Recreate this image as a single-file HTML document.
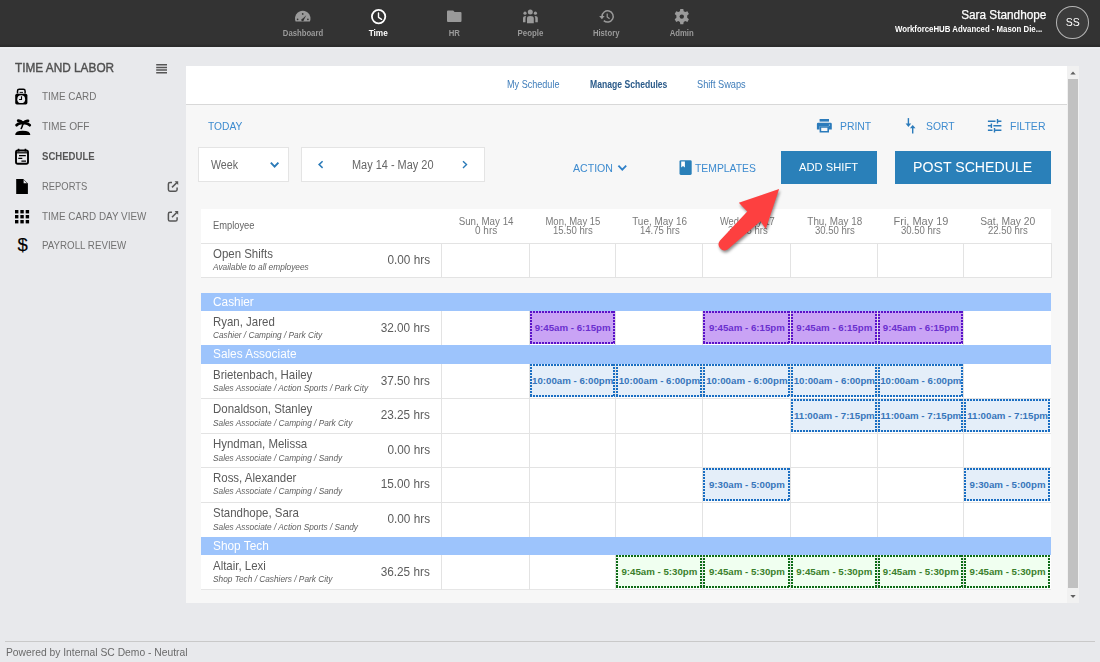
<!DOCTYPE html>
<html><head><meta charset="utf-8">
<style>
*{box-sizing:border-box;margin:0;padding:0}
html,body{width:1100px;height:662px;overflow:hidden;background:#e8e9ec;font-family:"Liberation Sans",sans-serif}
.t{position:absolute;white-space:nowrap;line-height:1}
.a{position:absolute}
#hdr{left:0;top:0;width:1100px;height:47px;background:linear-gradient(#333333 0,#333333 44px,#2e2e2e 45px,#2b2b2b 47px)}
#panel{left:186px;top:66px;width:881px;height:537px;background:#f7f7f7}
#subnav{left:186px;top:66px;width:881px;height:39px;background:#fff;border-bottom:1px solid #d8d8d8}
#sb{left:1067px;top:66px;width:12px;height:537px;background:#f1f1f1}
#thumb{left:1068px;top:79px;width:10px;height:509px;background:#c1c1c1}
.box{background:#fff;border:1px solid #e0e0e0}
.btn{background:#2980b9}
.tbl{background:#fff}
.hl{position:absolute;height:1px;background:#e2e2e2}
.vl{position:absolute;width:1px;background:#e2e2e2}
.band{position:absolute;left:201px;width:850px;background:#9fc5fb}
.sh{position:absolute}
</style></head><body>
<div class="a" id="hdr"></div>
<div class="a" style="left:0;top:47px;width:1100px;height:2px;background:#ecedf0"></div>
<div class="a" id="avatar" style="left:1056px;top:5.5px;width:33px;height:33.5px;border-radius:50%;border:1.6px solid #b5b5b5;background:#3c3c3c"></div>
<div class="a" id="panel"></div>
<div class="a" id="subnav"></div>
<div class="a" id="sb"></div>
<div class="a" id="thumb"></div>
<div class="a" style="left:198.00px;top:147.00px;width:91.00px;height:34.50px;background:#fff;border:1px solid #e4e4e4"></div>
<div class="a" style="left:301.00px;top:147.00px;width:184.00px;height:34.50px;background:#fff;border:1px solid #e4e4e4"></div>
<div class="a" style="left:780.50px;top:151.00px;width:96.50px;height:32.60px;background:#2a80b9"></div>
<div class="a" style="left:895.20px;top:151.00px;width:155.90px;height:32.60px;background:#2a80b9"></div>
<div class="a" style="left:201.00px;top:209.00px;width:850.00px;height:34.00px;background:#fff"></div>
<div class="a" style="left:201.00px;top:243.00px;width:850.00px;height:34.50px;background:#fff;border-top:1px solid #e3e3e3;border-bottom:1px solid #e3e3e3"></div>
<div class="a" style="left:201.00px;top:311.00px;width:850.00px;height:278.50px;background:#fff"></div>
<div class="a" style="left:201.00px;top:397.70px;width:850.00px;height:1.00px;background:#e3e3e3"></div>
<div class="a" style="left:201.00px;top:432.70px;width:850.00px;height:1.00px;background:#e3e3e3"></div>
<div class="a" style="left:201.00px;top:466.60px;width:850.00px;height:1.00px;background:#e3e3e3"></div>
<div class="a" style="left:201.00px;top:501.80px;width:850.00px;height:1.00px;background:#e3e3e3"></div>
<div class="a" style="left:201.00px;top:588.80px;width:850.00px;height:1.00px;background:#e6e6e6"></div>
<div class="a" style="left:441.30px;top:243.00px;width:1.00px;height:34.50px;background:#e3e3e3"></div>
<div class="a" style="left:441.30px;top:311.00px;width:1.00px;height:34.00px;background:#e3e3e3"></div>
<div class="a" style="left:441.30px;top:363.70px;width:1.00px;height:173.20px;background:#e3e3e3"></div>
<div class="a" style="left:441.30px;top:555.00px;width:1.00px;height:34.50px;background:#e3e3e3"></div>
<div class="a" style="left:528.80px;top:243.00px;width:1.00px;height:34.50px;background:#e3e3e3"></div>
<div class="a" style="left:528.80px;top:311.00px;width:1.00px;height:34.00px;background:#e3e3e3"></div>
<div class="a" style="left:528.80px;top:363.70px;width:1.00px;height:173.20px;background:#e3e3e3"></div>
<div class="a" style="left:528.80px;top:555.00px;width:1.00px;height:34.50px;background:#e3e3e3"></div>
<div class="a" style="left:615.00px;top:243.00px;width:1.00px;height:34.50px;background:#e3e3e3"></div>
<div class="a" style="left:615.00px;top:311.00px;width:1.00px;height:34.00px;background:#e3e3e3"></div>
<div class="a" style="left:615.00px;top:363.70px;width:1.00px;height:173.20px;background:#e3e3e3"></div>
<div class="a" style="left:615.00px;top:555.00px;width:1.00px;height:34.50px;background:#e3e3e3"></div>
<div class="a" style="left:702.20px;top:243.00px;width:1.00px;height:34.50px;background:#e3e3e3"></div>
<div class="a" style="left:702.20px;top:311.00px;width:1.00px;height:34.00px;background:#e3e3e3"></div>
<div class="a" style="left:702.20px;top:363.70px;width:1.00px;height:173.20px;background:#e3e3e3"></div>
<div class="a" style="left:702.20px;top:555.00px;width:1.00px;height:34.50px;background:#e3e3e3"></div>
<div class="a" style="left:790.00px;top:243.00px;width:1.00px;height:34.50px;background:#e3e3e3"></div>
<div class="a" style="left:790.00px;top:311.00px;width:1.00px;height:34.00px;background:#e3e3e3"></div>
<div class="a" style="left:790.00px;top:363.70px;width:1.00px;height:173.20px;background:#e3e3e3"></div>
<div class="a" style="left:790.00px;top:555.00px;width:1.00px;height:34.50px;background:#e3e3e3"></div>
<div class="a" style="left:877.00px;top:243.00px;width:1.00px;height:34.50px;background:#e3e3e3"></div>
<div class="a" style="left:877.00px;top:311.00px;width:1.00px;height:34.00px;background:#e3e3e3"></div>
<div class="a" style="left:877.00px;top:363.70px;width:1.00px;height:173.20px;background:#e3e3e3"></div>
<div class="a" style="left:877.00px;top:555.00px;width:1.00px;height:34.50px;background:#e3e3e3"></div>
<div class="a" style="left:963.00px;top:243.00px;width:1.00px;height:34.50px;background:#e3e3e3"></div>
<div class="a" style="left:963.00px;top:311.00px;width:1.00px;height:34.00px;background:#e3e3e3"></div>
<div class="a" style="left:963.00px;top:363.70px;width:1.00px;height:173.20px;background:#e3e3e3"></div>
<div class="a" style="left:963.00px;top:555.00px;width:1.00px;height:34.50px;background:#e3e3e3"></div>
<div class="a" style="left:1050.50px;top:243.00px;width:1.00px;height:34.50px;background:#e3e3e3"></div>
<div class="a" style="left:201.00px;top:293.00px;width:850.00px;height:18.00px;background:#9dc4fc"></div>
<div class="a" style="left:201.00px;top:345.00px;width:850.00px;height:18.70px;background:#9dc4fc"></div>
<div class="a" style="left:201.00px;top:537.00px;width:850.00px;height:18.00px;background:#9dc4fc"></div>
<div class="a" style="left:530.00px;top:311.00px;width:85.00px;height:33.00px;background:repeating-linear-gradient(90deg,#5a12c8 0 1.6px,transparent 1.6px 3px) left top/100% 2px no-repeat,repeating-linear-gradient(90deg,#5a12c8 0 1.6px,transparent 1.6px 3px) left bottom/100% 2px no-repeat,repeating-linear-gradient(180deg,#5a12c8 0 1.6px,transparent 1.6px 3px) left top/2px 100% no-repeat,repeating-linear-gradient(180deg,#5a12c8 0 1.6px,transparent 1.6px 3px) right top/2px 100% no-repeat,#c9a3f5"></div>
<div class="a" style="left:703.00px;top:311.00px;width:87.00px;height:33.00px;background:repeating-linear-gradient(90deg,#5a12c8 0 1.6px,transparent 1.6px 3px) left top/100% 2px no-repeat,repeating-linear-gradient(90deg,#5a12c8 0 1.6px,transparent 1.6px 3px) left bottom/100% 2px no-repeat,repeating-linear-gradient(180deg,#5a12c8 0 1.6px,transparent 1.6px 3px) left top/2px 100% no-repeat,repeating-linear-gradient(180deg,#5a12c8 0 1.6px,transparent 1.6px 3px) right top/2px 100% no-repeat,#c9a3f5"></div>
<div class="a" style="left:791.00px;top:311.00px;width:86.00px;height:33.00px;background:repeating-linear-gradient(90deg,#5a12c8 0 1.6px,transparent 1.6px 3px) left top/100% 2px no-repeat,repeating-linear-gradient(90deg,#5a12c8 0 1.6px,transparent 1.6px 3px) left bottom/100% 2px no-repeat,repeating-linear-gradient(180deg,#5a12c8 0 1.6px,transparent 1.6px 3px) left top/2px 100% no-repeat,repeating-linear-gradient(180deg,#5a12c8 0 1.6px,transparent 1.6px 3px) right top/2px 100% no-repeat,#c9a3f5"></div>
<div class="a" style="left:878.00px;top:311.00px;width:85.00px;height:33.00px;background:repeating-linear-gradient(90deg,#5a12c8 0 1.6px,transparent 1.6px 3px) left top/100% 2px no-repeat,repeating-linear-gradient(90deg,#5a12c8 0 1.6px,transparent 1.6px 3px) left bottom/100% 2px no-repeat,repeating-linear-gradient(180deg,#5a12c8 0 1.6px,transparent 1.6px 3px) left top/2px 100% no-repeat,repeating-linear-gradient(180deg,#5a12c8 0 1.6px,transparent 1.6px 3px) right top/2px 100% no-repeat,#c9a3f5"></div>
<div class="a" style="left:530.00px;top:364.00px;width:85.00px;height:33.00px;background:repeating-linear-gradient(90deg,#1a6ec2 0 1.6px,transparent 1.6px 3px) left top/100% 2px no-repeat,repeating-linear-gradient(90deg,#1a6ec2 0 1.6px,transparent 1.6px 3px) left bottom/100% 2px no-repeat,repeating-linear-gradient(180deg,#1a6ec2 0 1.6px,transparent 1.6px 3px) left top/2px 100% no-repeat,repeating-linear-gradient(180deg,#1a6ec2 0 1.6px,transparent 1.6px 3px) right top/2px 100% no-repeat,#e4eef9"></div>
<div class="a" style="left:616.00px;top:364.00px;width:86.00px;height:33.00px;background:repeating-linear-gradient(90deg,#1a6ec2 0 1.6px,transparent 1.6px 3px) left top/100% 2px no-repeat,repeating-linear-gradient(90deg,#1a6ec2 0 1.6px,transparent 1.6px 3px) left bottom/100% 2px no-repeat,repeating-linear-gradient(180deg,#1a6ec2 0 1.6px,transparent 1.6px 3px) left top/2px 100% no-repeat,repeating-linear-gradient(180deg,#1a6ec2 0 1.6px,transparent 1.6px 3px) right top/2px 100% no-repeat,#e4eef9"></div>
<div class="a" style="left:703.00px;top:364.00px;width:87.00px;height:33.00px;background:repeating-linear-gradient(90deg,#1a6ec2 0 1.6px,transparent 1.6px 3px) left top/100% 2px no-repeat,repeating-linear-gradient(90deg,#1a6ec2 0 1.6px,transparent 1.6px 3px) left bottom/100% 2px no-repeat,repeating-linear-gradient(180deg,#1a6ec2 0 1.6px,transparent 1.6px 3px) left top/2px 100% no-repeat,repeating-linear-gradient(180deg,#1a6ec2 0 1.6px,transparent 1.6px 3px) right top/2px 100% no-repeat,#e4eef9"></div>
<div class="a" style="left:791.00px;top:364.00px;width:86.00px;height:33.00px;background:repeating-linear-gradient(90deg,#1a6ec2 0 1.6px,transparent 1.6px 3px) left top/100% 2px no-repeat,repeating-linear-gradient(90deg,#1a6ec2 0 1.6px,transparent 1.6px 3px) left bottom/100% 2px no-repeat,repeating-linear-gradient(180deg,#1a6ec2 0 1.6px,transparent 1.6px 3px) left top/2px 100% no-repeat,repeating-linear-gradient(180deg,#1a6ec2 0 1.6px,transparent 1.6px 3px) right top/2px 100% no-repeat,#e4eef9"></div>
<div class="a" style="left:878.00px;top:364.00px;width:85.00px;height:33.00px;background:repeating-linear-gradient(90deg,#1a6ec2 0 1.6px,transparent 1.6px 3px) left top/100% 2px no-repeat,repeating-linear-gradient(90deg,#1a6ec2 0 1.6px,transparent 1.6px 3px) left bottom/100% 2px no-repeat,repeating-linear-gradient(180deg,#1a6ec2 0 1.6px,transparent 1.6px 3px) left top/2px 100% no-repeat,repeating-linear-gradient(180deg,#1a6ec2 0 1.6px,transparent 1.6px 3px) right top/2px 100% no-repeat,#e4eef9"></div>
<div class="a" style="left:791.00px;top:399.00px;width:86.00px;height:33.00px;background:repeating-linear-gradient(90deg,#1a6ec2 0 1.6px,transparent 1.6px 3px) left top/100% 2px no-repeat,repeating-linear-gradient(90deg,#1a6ec2 0 1.6px,transparent 1.6px 3px) left bottom/100% 2px no-repeat,repeating-linear-gradient(180deg,#1a6ec2 0 1.6px,transparent 1.6px 3px) left top/2px 100% no-repeat,repeating-linear-gradient(180deg,#1a6ec2 0 1.6px,transparent 1.6px 3px) right top/2px 100% no-repeat,#e4eef9"></div>
<div class="a" style="left:878.00px;top:399.00px;width:85.00px;height:33.00px;background:repeating-linear-gradient(90deg,#1a6ec2 0 1.6px,transparent 1.6px 3px) left top/100% 2px no-repeat,repeating-linear-gradient(90deg,#1a6ec2 0 1.6px,transparent 1.6px 3px) left bottom/100% 2px no-repeat,repeating-linear-gradient(180deg,#1a6ec2 0 1.6px,transparent 1.6px 3px) left top/2px 100% no-repeat,repeating-linear-gradient(180deg,#1a6ec2 0 1.6px,transparent 1.6px 3px) right top/2px 100% no-repeat,#e4eef9"></div>
<div class="a" style="left:964.00px;top:399.00px;width:86.00px;height:33.00px;background:repeating-linear-gradient(90deg,#1a6ec2 0 1.6px,transparent 1.6px 3px) left top/100% 2px no-repeat,repeating-linear-gradient(90deg,#1a6ec2 0 1.6px,transparent 1.6px 3px) left bottom/100% 2px no-repeat,repeating-linear-gradient(180deg,#1a6ec2 0 1.6px,transparent 1.6px 3px) left top/2px 100% no-repeat,repeating-linear-gradient(180deg,#1a6ec2 0 1.6px,transparent 1.6px 3px) right top/2px 100% no-repeat,#e4eef9"></div>
<div class="a" style="left:703.00px;top:468.00px;width:87.00px;height:33.00px;background:repeating-linear-gradient(90deg,#1a6ec2 0 1.6px,transparent 1.6px 3px) left top/100% 2px no-repeat,repeating-linear-gradient(90deg,#1a6ec2 0 1.6px,transparent 1.6px 3px) left bottom/100% 2px no-repeat,repeating-linear-gradient(180deg,#1a6ec2 0 1.6px,transparent 1.6px 3px) left top/2px 100% no-repeat,repeating-linear-gradient(180deg,#1a6ec2 0 1.6px,transparent 1.6px 3px) right top/2px 100% no-repeat,#e4eef9"></div>
<div class="a" style="left:964.00px;top:468.00px;width:86.00px;height:33.00px;background:repeating-linear-gradient(90deg,#1a6ec2 0 1.6px,transparent 1.6px 3px) left top/100% 2px no-repeat,repeating-linear-gradient(90deg,#1a6ec2 0 1.6px,transparent 1.6px 3px) left bottom/100% 2px no-repeat,repeating-linear-gradient(180deg,#1a6ec2 0 1.6px,transparent 1.6px 3px) left top/2px 100% no-repeat,repeating-linear-gradient(180deg,#1a6ec2 0 1.6px,transparent 1.6px 3px) right top/2px 100% no-repeat,#e4eef9"></div>
<div class="a" style="left:616.00px;top:555.00px;width:86.00px;height:33.00px;background:repeating-linear-gradient(90deg,#0e6b17 0 1.6px,transparent 1.6px 3px) left top/100% 2px no-repeat,repeating-linear-gradient(90deg,#0e6b17 0 1.6px,transparent 1.6px 3px) left bottom/100% 2px no-repeat,repeating-linear-gradient(180deg,#0e6b17 0 1.6px,transparent 1.6px 3px) left top/2px 100% no-repeat,repeating-linear-gradient(180deg,#0e6b17 0 1.6px,transparent 1.6px 3px) right top/2px 100% no-repeat,#f0fff0"></div>
<div class="a" style="left:703.00px;top:555.00px;width:87.00px;height:33.00px;background:repeating-linear-gradient(90deg,#0e6b17 0 1.6px,transparent 1.6px 3px) left top/100% 2px no-repeat,repeating-linear-gradient(90deg,#0e6b17 0 1.6px,transparent 1.6px 3px) left bottom/100% 2px no-repeat,repeating-linear-gradient(180deg,#0e6b17 0 1.6px,transparent 1.6px 3px) left top/2px 100% no-repeat,repeating-linear-gradient(180deg,#0e6b17 0 1.6px,transparent 1.6px 3px) right top/2px 100% no-repeat,#f0fff0"></div>
<div class="a" style="left:791.00px;top:555.00px;width:86.00px;height:33.00px;background:repeating-linear-gradient(90deg,#0e6b17 0 1.6px,transparent 1.6px 3px) left top/100% 2px no-repeat,repeating-linear-gradient(90deg,#0e6b17 0 1.6px,transparent 1.6px 3px) left bottom/100% 2px no-repeat,repeating-linear-gradient(180deg,#0e6b17 0 1.6px,transparent 1.6px 3px) left top/2px 100% no-repeat,repeating-linear-gradient(180deg,#0e6b17 0 1.6px,transparent 1.6px 3px) right top/2px 100% no-repeat,#f0fff0"></div>
<div class="a" style="left:878.00px;top:555.00px;width:85.00px;height:33.00px;background:repeating-linear-gradient(90deg,#0e6b17 0 1.6px,transparent 1.6px 3px) left top/100% 2px no-repeat,repeating-linear-gradient(90deg,#0e6b17 0 1.6px,transparent 1.6px 3px) left bottom/100% 2px no-repeat,repeating-linear-gradient(180deg,#0e6b17 0 1.6px,transparent 1.6px 3px) left top/2px 100% no-repeat,repeating-linear-gradient(180deg,#0e6b17 0 1.6px,transparent 1.6px 3px) right top/2px 100% no-repeat,#f0fff0"></div>
<div class="a" style="left:964.00px;top:555.00px;width:86.00px;height:33.00px;background:repeating-linear-gradient(90deg,#0e6b17 0 1.6px,transparent 1.6px 3px) left top/100% 2px no-repeat,repeating-linear-gradient(90deg,#0e6b17 0 1.6px,transparent 1.6px 3px) left bottom/100% 2px no-repeat,repeating-linear-gradient(180deg,#0e6b17 0 1.6px,transparent 1.6px 3px) left top/2px 100% no-repeat,repeating-linear-gradient(180deg,#0e6b17 0 1.6px,transparent 1.6px 3px) right top/2px 100% no-repeat,#f0fff0"></div>
<svg class="a" style="left:0;top:0" width="1100" height="662" viewBox="0 0 1100 662">
<!-- dashboard gauge -->
<path fill="#9a9a9a" d="M295.6 21.5 A7.75 7.75 0 1 1 309.9 21.5 Z"/>
<g fill="#333">
 <circle cx="302.7" cy="13.9" r="0.85"/><circle cx="297.6" cy="19.3" r="0.85"/><circle cx="307.9" cy="19.3" r="0.85"/>
 <path d="M301.7 19.6 L306.3 15.3 L303.5 20.6 Z"/><circle cx="302.5" cy="20" r="1.2"/>
</g>
<!-- time clock -->
<g fill="none" stroke="#fff">
 <circle cx="378.6" cy="16.6" r="6.7" stroke-width="1.8"/>
 <path d="M378.5 13 V17.3 L381.6 19.3" stroke-width="1.4" stroke-linecap="round" stroke-linejoin="round"/>
</g>
<!-- HR folder -->
<path fill="#9a9a9a" d="M447 11.5 Q447 10.5 448 10.5 L453.2 10.5 L454.6 12 L460.5 12 Q461.5 12 461.5 13 L461.5 21 Q461.5 22 460.5 22 L448 22 Q447 22 447 21 Z"/>
<!-- people -->
<g fill="#9a9a9a">
 <circle cx="530.3" cy="12.1" r="2.5"/><circle cx="525" cy="13.2" r="1.6"/><circle cx="535.4" cy="13.2" r="1.6"/>
 <path d="M527 23.3 L527 18.5 Q527 16.1 530.3 16.1 Q533.8 16.1 533.8 18.5 L533.8 23.3 Z"/>
 <path d="M523 22.2 L523 18.3 Q523 16.1 526 16.1 L526.2 16.1 Q525.5 17.2 525.5 19 L525.5 22.2 Z"/>
 <path d="M537.8 22.2 L537.8 18.3 Q537.8 16.1 534.8 16.1 L534.6 16.1 Q535.3 17.2 535.3 19 L535.3 22.2 Z"/>
</g>
<!-- history -->
<g fill="none" stroke="#9a9a9a" stroke-width="1.5">
 <path d="M602 16.4 A5.6 5.6 0 1 1 603.8 20.6"/>
 <path d="M607.2 13.6 V17 L609.6 18.8" stroke-width="1.2"/>
</g>
<path fill="#9a9a9a" d="M599.2 16 L604.6 16 L601.9 19.2 Z"/>
<!-- admin gear -->
<g transform="translate(681.8 16.6)" fill="#9a9a9a">
 <path d="M-1.5 -7.6 L1.5 -7.6 L1.9 -5.4 L3.5 -4.5 L5.6 -5.3 L7.1 -2.7 L5.4 -1.2 L5.4 1.2 L7.1 2.7 L5.6 5.3 L3.5 4.5 L1.9 5.4 L1.5 7.6 L-1.5 7.6 L-1.9 5.4 L-3.5 4.5 L-5.6 5.3 L-7.1 2.7 L-5.4 1.2 L-5.4 -1.2 L-7.1 -2.7 L-5.6 -5.3 L-3.5 -4.5 L-1.9 -5.4 Z"/>
 <circle r="2.2" fill="#333"/>
</g>
<!-- sidebar icons -->
<g fill="#000">
 <!-- time card -->
 <path d="M17.5 93.6 L17.5 91 Q17.5 89.3 19.2 89.3 L23.4 89.3 Q25.1 89.3 25.1 91 L25.1 93.6" fill="none" stroke="#000" stroke-width="1.5"/>
 <rect x="19.6" y="91.9" width="3.4" height="0.9" fill="#000"/>
 <rect x="15.2" y="93.8" width="12.2" height="10.6" rx="1.6"/>
</g>
<circle cx="21.2" cy="99.2" r="3.9" fill="#e8e9ec"/>
<path d="M21.5 96.3 V99.5 H19.1" stroke="#000" stroke-width="1.1" fill="none"/>
<!-- time off -->
<g fill="none" stroke="#000" stroke-width="2.8" stroke-linecap="round">
 <path d="M22.8 123 Q20.5 120.3 18.2 120.6"/>
 <path d="M22.6 123.2 Q18.5 122.6 16.6 125.2"/>
 <path d="M23.2 123 Q25.8 120.3 28 120.9"/>
 <path d="M23.4 123.2 Q27.5 122.6 29.7 125.2"/>
 <path d="M22.6 125 Q22 127.4 21.2 128.4" stroke-width="1.6"/>
</g>
<g fill="#000">
 <path d="M15.2 135 Q15 130.7 22.7 130.7 Q30.4 130.7 30.3 135 Z"/>
</g>
<!-- schedule calendar -->
<g fill="none" stroke="#000">
 <rect x="16" y="150.5" width="12" height="13.2" rx="1.8" stroke-width="1.9"/>
 <path d="M18.6 148.7 V151.5 M25.4 148.7 V151.5" stroke-width="1.6"/>
 <path d="M16 152.8 H28" stroke-width="1.2"/>
 <path d="M19 155.7 H25.8 M18.3 158.4 H22.3 M21.4 161.1 H26" stroke-width="1.3"/>
</g>
<!-- reports -->
<path fill="#000" d="M16.2 178.9 L23.2 178.9 L27.9 183.6 L27.9 194 L16.2 194 Z"/>
<path fill="#e8e9ec" d="M23.6 179.8 L27 183.2 L23.6 183.2 Z"/>
<!-- grid -->
<g fill="#000">
 <rect x="15" y="210" width="3.4" height="3.4"/>
 <rect x="20.35" y="210" width="3.4" height="3.4"/>
 <rect x="25.7" y="210" width="3.4" height="3.4"/>
 <rect x="15" y="215" width="3.4" height="3.4"/>
 <rect x="20.35" y="215" width="3.4" height="3.4"/>
 <rect x="25.7" y="215" width="3.4" height="3.4"/>
 <rect x="15" y="220" width="3.4" height="3.4"/>
 <rect x="20.35" y="220" width="3.4" height="3.4"/>
 <rect x="25.7" y="220" width="3.4" height="3.4"/>
</g>
<!-- hamburger -->
<g stroke="#555" stroke-width="1.5">
 <path d="M156.2 64.7 H167 M156.2 67.4 H167 M156.2 70.1 H167 M156.2 72.8 H167"/>
</g>
<!-- external links -->
<g fill="none" stroke="#555" stroke-width="1.5">
 <path d="M172 182.5 H170 Q168.4 182.5 168.4 184.1 V189.6 Q168.4 191.2 170 191.2 H175.5 Q177.1 191.2 177.1 189.6 V187.5"/>
 <path d="M172 187.4 L177.2 182.2"/>
 <path d="M172 212.3 H170 Q168.4 212.3 168.4 213.9 V219.4 Q168.4 221 170 221 H175.5 Q177.1 221 177.1 219.4 V217.3"/>
 <path d="M172 217.2 L177.2 212"/>
</g>
<path fill="#555" d="M174.6 181.3 H178.2 V184.9 Z M174.6 211.1 H178.2 V214.7 Z"/>
<!-- print -->
<g fill="#2b7bbb">
 <rect x="819.6" y="119" width="9.4" height="2.6"/>
 <path d="M818.2 122.8 H830.5 Q831.8 122.8 831.8 124.1 V129.5 H829 V126.3 H819.6 V129.5 H816.9 V124.1 Q816.9 122.8 818.2 122.8 Z"/>
 <path d="M819.6 126.3 H829 V132.6 H819.6 Z M821.2 127.8 V131 H827.4 V127.8 Z" fill-rule="evenodd"/>
</g>
<circle cx="829.4" cy="125" r="0.6" fill="#f5f5f5"/>
<!-- sort -->
<g fill="#2b7bbb">
 <rect x="907.7" y="118.1" width="1.4" height="6"/>
 <path d="M905.6 123.4 H911.2 L908.4 127 Z"/>
 <rect x="912" y="127.5" width="1.4" height="6"/>
 <path d="M909.9 128.3 H915.5 L912.7 125 Z"/>
</g>
<!-- filter -->
<g stroke="#2b7bbb" stroke-width="1.4" fill="none">
 <path d="M987.9 121.3 H995.5 M997.5 121.3 H1001.4 M997.5 119 V123.5"/>
 <path d="M987.9 125.7 H991.4 M993.4 125.7 H1001.4 M991.4 123.6 V128"/>
 <path d="M987.9 130.3 H992.5 M994.5 130.3 H1001.4 M994.5 128.1 V132.5"/>
</g>
<!-- week chevron -->
<path d="M270.8 162.6 L274.6 166.6 L278.4 162.6" fill="none" stroke="#2a7ab8" stroke-width="1.9"/>
<!-- prev/next -->
<path d="M322.6 161.3 L319.1 164.6 L322.6 167.9" fill="none" stroke="#2a7ab8" stroke-width="1.5"/>
<path d="M463 161.3 L466.5 164.6 L463 167.9" fill="none" stroke="#2a7ab8" stroke-width="1.4"/>
<!-- action chevron -->
<path d="M618.4 165.7 L622.3 169.7 L626.2 165.7" fill="none" stroke="#2f80c8" stroke-width="1.8"/>
<!-- templates -->
<rect x="679.5" y="160.2" width="12.2" height="14.7" rx="1.3" fill="#2a80b9"/>
<path d="M681.2 161.5 H684.9 V167.5 L683 166 L681.2 167.5 Z" fill="#fff"/>
<!-- scrollbar arrows -->
<path d="M1070.3 74.5 L1073 71.6 L1075.7 74.5 Z" fill="#606060"/>
<path d="M1070.3 595 L1073 597.9 L1075.7 595 Z" fill="#606060"/>
</svg>
<div class="t" style="left:17.6px;top:235.6px;font-size:18.5px;color:#000;line-height:1;-webkit-text-stroke:0.15px #000">$</div>

<span class="t" style="top:28.72px;font-size:8.8px;color:#9a9a9a;font-weight:700;left:279.52px;transform:scaleX(0.8770);transform-origin:50% 0;">Dashboard</span>
<span class="t" style="top:28.72px;font-size:8.8px;color:#ffffff;font-weight:700;left:368.21px;transform:scaleX(0.9374);transform-origin:50% 0;">Time</span>
<span class="t" style="top:28.72px;font-size:8.8px;color:#9a9a9a;font-weight:700;left:448.04px;transform:scaleX(0.8806);transform-origin:50% 0;">HR</span>
<span class="t" style="top:28.72px;font-size:8.8px;color:#9a9a9a;font-weight:700;left:515.58px;transform:scaleX(0.8910);transform-origin:50% 0;">People</span>
<span class="t" style="top:28.72px;font-size:8.8px;color:#9a9a9a;font-weight:700;left:590.54px;transform:scaleX(0.8742);transform-origin:50% 0;">History</span>
<span class="t" style="top:28.72px;font-size:8.8px;color:#9a9a9a;font-weight:700;left:667.91px;transform:scaleX(0.8804);transform-origin:50% 0;">Admin</span>
<span class="t" style="top:8.88px;font-size:12.5px;color:#ffffff;-webkit-text-stroke:0.25px #fff;left:955.84px;transform:scaleX(0.9429);transform-origin:100% 0;">Sara Standhope</span>
<span class="t" style="top:26.03px;font-size:8.2px;color:#ffffff;font-weight:700;left:887.57px;transform:scaleX(0.9550);transform-origin:100% 0;">WorkforceHUB Advanced - Mason Die...</span>
<span class="t" style="top:15.74px;font-size:11.6px;color:#ffffff;left:1064.87px;transform:scaleX(0.9051);transform-origin:50% 0;">SS</span>
<span class="t" style="top:62.05px;font-size:12.3px;color:#505050;-webkit-text-stroke:0.4px #505050;left:15.10px;transform:scaleX(0.9604);transform-origin:0 0;">TIME AND LABOR</span>
<span class="t" style="top:91.33px;font-size:10.9px;color:#727272;left:41.70px;transform:scaleX(0.9081);transform-origin:0 0;">TIME CARD</span>
<span class="t" style="top:121.33px;font-size:10.9px;color:#727272;left:41.70px;transform:scaleX(0.9345);transform-origin:0 0;">TIME OFF</span>
<span class="t" style="top:150.83px;font-size:10.9px;color:#555555;font-weight:700;left:41.70px;transform:scaleX(0.8780);transform-origin:0 0;">SCHEDULE</span>
<span class="t" style="top:181.24px;font-size:10.9px;color:#727272;left:41.70px;transform:scaleX(0.8636);transform-origin:0 0;">REPORTS</span>
<span class="t" style="top:210.74px;font-size:10.9px;color:#727272;left:41.70px;transform:scaleX(0.9056);transform-origin:0 0;">TIME CARD DAY VIEW</span>
<span class="t" style="top:240.13px;font-size:10.9px;color:#727272;left:41.70px;transform:scaleX(0.8947);transform-origin:0 0;">PAYROLL REVIEW</span>
<span class="t" style="top:79.76px;font-size:10.4px;color:#3f7dba;left:506.50px;transform:scaleX(0.8739);transform-origin:0 0;">My Schedule</span>
<span class="t" style="top:79.76px;font-size:10.4px;color:#2b5b8a;font-weight:700;left:589.60px;transform:scaleX(0.8274);transform-origin:0 0;">Manage Schedules</span>
<span class="t" style="top:79.76px;font-size:10.4px;color:#3f7dba;left:697.30px;transform:scaleX(0.8875);transform-origin:0 0;">Shift Swaps</span>
<span class="t" style="top:121.25px;font-size:11px;color:#3d8bcf;left:207.60px;transform:scaleX(0.9325);transform-origin:0 0;">TODAY</span>
<span class="t" style="top:121.25px;font-size:11px;color:#3d8bcf;left:839.60px;transform:scaleX(0.9455);transform-origin:0 0;">PRINT</span>
<span class="t" style="top:121.25px;font-size:11px;color:#3d8bcf;left:926.00px;transform:scaleX(0.9388);transform-origin:0 0;">SORT</span>
<span class="t" style="top:121.25px;font-size:11px;color:#3d8bcf;left:1009.80px;transform:scaleX(0.9574);transform-origin:0 0;">FILTER</span>
<span class="t" style="top:158.54px;font-size:12.3px;color:#666666;left:211.00px;transform:scaleX(0.8649);transform-origin:0 0;">Week</span>
<span class="t" style="top:158.54px;font-size:12.3px;color:#666666;left:352.20px;transform:scaleX(0.8898);transform-origin:0 0;">May 14 - May 20</span>
<span class="t" style="top:162.50px;font-size:11.3px;color:#3d8bcf;left:572.70px;transform:scaleX(0.9370);transform-origin:0 0;">ACTION</span>
<span class="t" style="top:162.50px;font-size:11.3px;color:#3d8bcf;left:695.10px;transform:scaleX(0.9179);transform-origin:0 0;">TEMPLATES</span>
<span class="t" style="top:162.22px;font-size:11.5px;color:#ffffff;left:798.90px;transform:scaleX(0.9736);transform-origin:0 0;">ADD SHIFT</span>
<span class="t" style="top:159.18px;font-size:15.2px;color:#ffffff;left:913.20px;transform:scaleX(0.9319);transform-origin:0 0;">POST SCHEDULE</span>
<span class="t" style="top:221.10px;font-size:10px;color:#666666;left:213.40px;transform:scaleX(0.9332);transform-origin:0 0;">Employee</span>
<span class="t" style="top:216.70px;font-size:10.0px;color:#7a7a7a;left:458.27px;transform:scaleX(0.9775);transform-origin:50% 0;">Sun, May 14</span>
<span class="t" style="top:226.30px;font-size:10.0px;color:#7a7a7a;left:475.23px;transform:scaleX(0.9962);transform-origin:50% 0;">0 hrs</span>
<span class="t" style="top:216.70px;font-size:10.0px;color:#7a7a7a;left:544.29px;transform:scaleX(0.9494);transform-origin:50% 0;">Mon, May 15</span>
<span class="t" style="top:226.30px;font-size:10.0px;color:#7a7a7a;left:552.35px;transform:scaleX(0.9560);transform-origin:50% 0;">15.50 hrs</span>
<span class="t" style="top:216.70px;font-size:10.0px;color:#7a7a7a;left:632.29px;transform:scaleX(0.9940);transform-origin:50% 0;">Tue, May 16</span>
<span class="t" style="top:226.30px;font-size:10.0px;color:#7a7a7a;left:639.05px;transform:scaleX(0.9560);transform-origin:50% 0;">14.75 hrs</span>
<span class="t" style="top:216.70px;font-size:10.0px;color:#7a7a7a;left:718.03px;transform:scaleX(0.9345);transform-origin:50% 0;">Wed, May 17</span>
<span class="t" style="top:226.30px;font-size:10.0px;color:#7a7a7a;left:726.55px;transform:scaleX(0.9560);transform-origin:50% 0;">30.25 hrs</span>
<span class="t" style="top:216.70px;font-size:10.0px;color:#7a7a7a;left:807.00px;transform:scaleX(0.9873);transform-origin:50% 0;">Thu, May 18</span>
<span class="t" style="top:226.30px;font-size:10.0px;color:#7a7a7a;left:813.95px;transform:scaleX(0.9560);transform-origin:50% 0;">30.50 hrs</span>
<span class="t" style="top:216.70px;font-size:10.0px;color:#7a7a7a;left:896.29px;transform:scaleX(1.0975);transform-origin:50% 0;">Fri, May 19</span>
<span class="t" style="top:226.30px;font-size:10.0px;color:#7a7a7a;left:900.45px;transform:scaleX(0.9560);transform-origin:50% 0;">30.50 hrs</span>
<span class="t" style="top:216.70px;font-size:10.0px;color:#7a7a7a;left:981.37px;transform:scaleX(1.0287);transform-origin:50% 0;">Sat, May 20</span>
<span class="t" style="top:226.30px;font-size:10.0px;color:#7a7a7a;left:987.20px;transform:scaleX(0.9560);transform-origin:50% 0;">22.50 hrs</span>
<span class="t" style="top:247.83px;font-size:12.2px;color:#5a5a5a;left:212.80px;transform:scaleX(0.9400);transform-origin:0 0;">Open Shifts</span>
<span class="t" style="top:263.36px;font-size:8.4px;color:#606060;font-style:italic;left:212.80px;transform:scaleX(0.9900);transform-origin:0 0;">Available to all employees</span>
<span class="t" style="top:254.03px;font-size:12.2px;color:#5c5c5c;left:385.75px;transform:scaleX(0.9670);transform-origin:100% 0;">0.00 hrs</span>
<span class="t" style="top:315.83px;font-size:12.2px;color:#5a5a5a;left:212.80px;transform:scaleX(0.9400);transform-origin:0 0;">Ryan, Jared</span>
<span class="t" style="top:331.36px;font-size:8.4px;color:#606060;font-style:italic;left:212.80px;transform:scaleX(0.9900);transform-origin:0 0;">Cashier / Camping / Park City</span>
<span class="t" style="top:322.03px;font-size:12.2px;color:#5c5c5c;left:378.97px;transform:scaleX(0.9670);transform-origin:100% 0;">32.00 hrs</span>
<span class="t" style="top:368.53px;font-size:12.2px;color:#5a5a5a;left:212.80px;transform:scaleX(0.9400);transform-origin:0 0;">Brietenbach, Hailey</span>
<span class="t" style="top:384.06px;font-size:8.4px;color:#606060;font-style:italic;left:212.80px;transform:scaleX(0.9900);transform-origin:0 0;">Sales Associate / Action Sports / Park City</span>
<span class="t" style="top:374.73px;font-size:12.2px;color:#5c5c5c;left:378.97px;transform:scaleX(0.9670);transform-origin:100% 0;">37.50 hrs</span>
<span class="t" style="top:403.03px;font-size:12.2px;color:#5a5a5a;left:212.80px;transform:scaleX(0.9400);transform-origin:0 0;">Donaldson, Stanley</span>
<span class="t" style="top:418.56px;font-size:8.4px;color:#606060;font-style:italic;left:212.80px;transform:scaleX(0.9900);transform-origin:0 0;">Sales Associate / Camping / Park City</span>
<span class="t" style="top:409.23px;font-size:12.2px;color:#5c5c5c;left:378.97px;transform:scaleX(0.9670);transform-origin:100% 0;">23.25 hrs</span>
<span class="t" style="top:438.03px;font-size:12.2px;color:#5a5a5a;left:212.80px;transform:scaleX(0.9400);transform-origin:0 0;">Hyndman, Melissa</span>
<span class="t" style="top:453.56px;font-size:8.4px;color:#606060;font-style:italic;left:212.80px;transform:scaleX(0.9900);transform-origin:0 0;">Sales Associate / Camping / Sandy</span>
<span class="t" style="top:444.23px;font-size:12.2px;color:#5c5c5c;left:385.75px;transform:scaleX(0.9670);transform-origin:100% 0;">0.00 hrs</span>
<span class="t" style="top:471.93px;font-size:12.2px;color:#5a5a5a;left:212.80px;transform:scaleX(0.9400);transform-origin:0 0;">Ross, Alexander</span>
<span class="t" style="top:487.46px;font-size:8.4px;color:#606060;font-style:italic;left:212.80px;transform:scaleX(0.9900);transform-origin:0 0;">Sales Associate / Camping / Sandy</span>
<span class="t" style="top:478.13px;font-size:12.2px;color:#5c5c5c;left:378.97px;transform:scaleX(0.9670);transform-origin:100% 0;">15.00 hrs</span>
<span class="t" style="top:507.13px;font-size:12.2px;color:#5a5a5a;left:212.80px;transform:scaleX(0.9400);transform-origin:0 0;">Standhope, Sara</span>
<span class="t" style="top:522.66px;font-size:8.4px;color:#606060;font-style:italic;left:212.80px;transform:scaleX(0.9900);transform-origin:0 0;">Sales Associate / Action Sports / Sandy</span>
<span class="t" style="top:513.33px;font-size:12.2px;color:#5c5c5c;left:385.75px;transform:scaleX(0.9670);transform-origin:100% 0;">0.00 hrs</span>
<span class="t" style="top:559.83px;font-size:12.2px;color:#5a5a5a;left:212.80px;transform:scaleX(0.9400);transform-origin:0 0;">Altair, Lexi</span>
<span class="t" style="top:575.36px;font-size:8.4px;color:#606060;font-style:italic;left:212.80px;transform:scaleX(0.9900);transform-origin:0 0;">Shop Tech / Cashiers / Park City</span>
<span class="t" style="top:566.03px;font-size:12.2px;color:#5c5c5c;left:378.97px;transform:scaleX(0.9670);transform-origin:100% 0;">36.25 hrs</span>
<span class="t" style="top:295.80px;font-size:12px;color:#ffffff;left:212.80px;transform:scaleX(0.9870);transform-origin:0 0;">Cashier</span>
<span class="t" style="top:347.80px;font-size:12px;color:#ffffff;left:212.80px;transform:scaleX(0.9870);transform-origin:0 0;">Sales Associate</span>
<span class="t" style="top:539.80px;font-size:12px;color:#ffffff;left:212.80px;transform:scaleX(0.9870);transform-origin:0 0;">Shop Tech</span>
<span class="t" style="top:323.16px;font-size:9.7px;color:#6b2fcf;font-weight:700;left:534.74px;">9:45am - 6:15pm</span>
<span class="t" style="top:323.16px;font-size:9.7px;color:#6b2fcf;font-weight:700;left:708.94px;">9:45am - 6:15pm</span>
<span class="t" style="top:323.16px;font-size:9.7px;color:#6b2fcf;font-weight:700;left:796.34px;">9:45am - 6:15pm</span>
<span class="t" style="top:323.16px;font-size:9.7px;color:#6b2fcf;font-weight:700;left:882.84px;">9:45am - 6:15pm</span>
<span class="t" style="top:376.11px;font-size:9.7px;color:#3876bb;font-weight:700;left:532.04px;">10:00am - 6:00pm</span>
<span class="t" style="top:376.11px;font-size:9.7px;color:#3876bb;font-weight:700;left:618.74px;">10:00am - 6:00pm</span>
<span class="t" style="top:376.11px;font-size:9.7px;color:#3876bb;font-weight:700;left:706.24px;">10:00am - 6:00pm</span>
<span class="t" style="top:376.11px;font-size:9.7px;color:#3876bb;font-weight:700;left:793.64px;">10:00am - 6:00pm</span>
<span class="t" style="top:376.11px;font-size:9.7px;color:#3876bb;font-weight:700;left:880.14px;">10:00am - 6:00pm</span>
<span class="t" style="top:410.86px;font-size:9.7px;color:#3876bb;font-weight:700;left:793.91px;">11:00am - 7:15pm</span>
<span class="t" style="top:410.86px;font-size:9.7px;color:#3876bb;font-weight:700;left:880.41px;">11:00am - 7:15pm</span>
<span class="t" style="top:410.86px;font-size:9.7px;color:#3876bb;font-weight:700;left:967.16px;">11:00am - 7:15pm</span>
<span class="t" style="top:479.86px;font-size:9.7px;color:#3876bb;font-weight:700;left:708.94px;">9:30am - 5:00pm</span>
<span class="t" style="top:479.86px;font-size:9.7px;color:#3876bb;font-weight:700;left:969.59px;">9:30am - 5:00pm</span>
<span class="t" style="top:567.40px;font-size:9.7px;color:#3b7f2c;font-weight:700;left:621.44px;">9:45am - 5:30pm</span>
<span class="t" style="top:567.40px;font-size:9.7px;color:#3b7f2c;font-weight:700;left:708.94px;">9:45am - 5:30pm</span>
<span class="t" style="top:567.40px;font-size:9.7px;color:#3b7f2c;font-weight:700;left:796.34px;">9:45am - 5:30pm</span>
<span class="t" style="top:567.40px;font-size:9.7px;color:#3b7f2c;font-weight:700;left:882.84px;">9:45am - 5:30pm</span>
<span class="t" style="top:567.40px;font-size:9.7px;color:#3b7f2c;font-weight:700;left:969.59px;">9:45am - 5:30pm</span>
<span class="t" style="top:647.22px;font-size:10.8px;color:#6a6a6a;left:5.80px;transform:scaleX(0.9541);transform-origin:0 0;">Powered by Internal SC Demo - Neutral</span>
<svg class="a" style="left:0;top:0;filter:drop-shadow(1px 2px 1.5px rgba(0,0,0,0.45))" width="1100" height="662" viewBox="0 0 1100 662">
<path fill="#fd4040" d="M779.1 189.1 L738.8 202.7 L747.3 211.4 L720 240.6 A5.9 5.9 0 0 0 727.6 249.4 L760.4 221.2 L765.8 228.9 Z"/>
</svg>

<div class="a" style="left:5px;top:641px;width:1090px;height:1px;background:#c9c9c9"></div>
</body></html>
